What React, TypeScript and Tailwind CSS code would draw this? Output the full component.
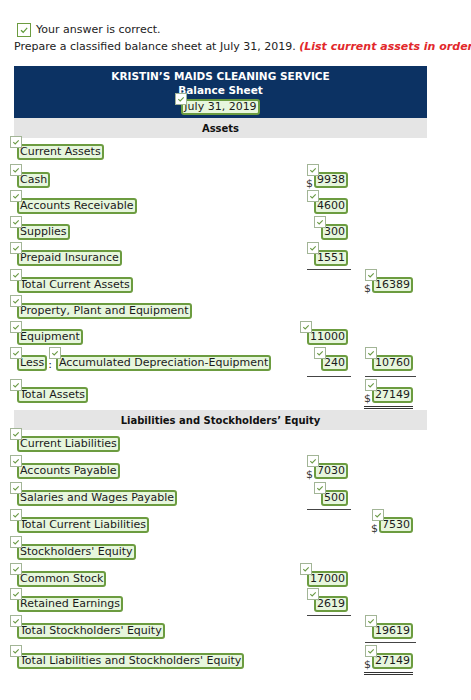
import React, { ReactNode } from "react";

const FONT = "font-['DejaVu_Sans','Verdana',sans-serif]";

function Mini({ cls }: { cls: string }) {
  return (
    <span
      className={`absolute ${cls} flex h-[12px] w-[12px] items-center justify-center border border-[#a2b596] bg-white`}
    >
      <svg width="8" height="8" viewBox="0 0 8 8">
        <path d="M1.3 4.1 L3.2 5.9 L6.7 2.3" fill="none" stroke="#6a9a45" strokeWidth="1.1" />
      </svg>
    </span>
  );
}

function Tag({ children, check = "-left-[9px] -top-[10px]" }: { children: ReactNode; check?: string }) {
  return (
    <span className="relative inline-flex h-[16px] items-center whitespace-nowrap rounded-[3px] border-2 border-[#6c9c40] bg-[#e7f6dd] px-[1px] text-[11px] leading-[12px] text-[#1b1b1b]">
      <Mini cls={check} />
      {children}
    </span>
  );
}

function Num({ v, dollar, dbl }: { v: string; dollar?: boolean; dbl?: boolean }) {
  return (
    <span
      className={`inline-flex items-end ${dbl ? "border-b-[3px] border-double border-[#333] pb-[3px]" : ""}`}
    >
      {dollar && <span className="mr-[1px] translate-y-[2px] text-[11px] leading-[12px] text-[#333]">$</span>}
      <Tag>{v}</Tag>
    </span>
  );
}

function Row({
  h,
  label,
  c1,
  c2,
  u1 = "",
  u2 = "",
}: {
  h: string;
  label?: ReactNode;
  c1?: ReactNode;
  c2?: ReactNode;
  u1?: string;
  u2?: string;
}) {
  return (
    <div className={`flex items-start ${h}`}>
      <div className="flex w-[293px] items-start pl-[3px]">{label}</div>
      <div className={`flex w-[44px] justify-end pr-[3px] ${u1}`}>{c1}</div>
      <div className="w-[14px]" />
      <div className={`flex w-[51px] justify-end pr-[3px] ${u2}`}>{c2}</div>
    </div>
  );
}

const U = "border-b border-[#444] pb-[3px]";
const U5 = "border-b border-[#444] pb-[5px]";

export default function App() {
  return (
    <div className={`${FONT} h-[700px] w-[471px] overflow-hidden bg-white text-[#222]`}>
      <div className="pt-[22px]">
        <div className="flex h-[15px] items-center pl-[17px]">
          <span className="flex h-[14px] w-[14px] items-center justify-center border border-[#6c9c40] bg-white">
            <svg width="10" height="10" viewBox="0 0 10 10">
              <path d="M2 5.2 L4.2 7.3 L8.2 2.9" fill="none" stroke="#5f9a3a" strokeWidth="1.2" />
            </svg>
          </span>
          <span className="ml-[5px] text-[11px] leading-[14px]">Your answer is correct.</span>
        </div>
        <div className="mt-[3px] h-[14px] whitespace-nowrap pl-[14px] text-[11px] leading-[14px]">
          Prepare a classified balance sheet at July 31, 2019.{" "}
          <span className="font-bold italic text-[#e2282b]">
            (List current assets in order of liquidity. List property, plant and equipment in order of land, building and equipment.)
          </span>
        </div>
      </div>

      <div className="ml-[14px] mt-[12px] w-[413px]">
        <div className="flex h-[52px] flex-col items-center bg-[#0c3263] pt-[3px] text-[10.5px] font-bold leading-[14px] text-white">
          <div>KRISTIN’S MAIDS CLEANING SERVICE</div>
          <div>Balance Sheet</div>
          <div className="mt-[2px] flex font-normal">
            <Tag check="-left-[8px] -top-[8px]">July 31, 2019</Tag>
          </div>
        </div>
        <div className="flex h-[20px] items-center justify-center bg-[#e5e5e5] text-[10px] font-bold text-[#111]">
          Assets
        </div>

        <Row h="h-[25px] pt-[6px]" label={<Tag>Current Assets</Tag>} />
        <Row h="h-[26px] pt-[9px]" label={<Tag>Cash</Tag>} c1={<Num v="9938" dollar />} />
        <Row h="h-[26px] pt-[9px]" label={<Tag>Accounts Receivable</Tag>} c1={<Num v="4600" />} />
        <Row h="h-[26px] pt-[9px]" label={<Tag>Supplies</Tag>} c1={<Num v="300" />} />
        <Row h="h-[27px] pt-[9px]" label={<Tag>Prepaid Insurance</Tag>} c1={<Num v="1551" />} u1={U} />
        <Row h="h-[26px] pt-[9px]" label={<Tag>Total Current Assets</Tag>} c2={<Num v="16389" dollar />} />
        <Row h="h-[26px] pt-[9px]" label={<Tag>Property, Plant and Equipment</Tag>} />
        <Row h="h-[26px] pt-[9px]" label={<Tag>Equipment</Tag>} c1={<Num v="11000" />} />
        <Row
          h="h-[32px] pt-[9px]"
          label={
            <span className="flex items-end">
              <Tag>Less</Tag>
              <span className="mx-[1px] text-[11px] leading-[12px]">:</span>
              <span className="ml-[3px] flex">
                <Tag>Accumulated Depreciation-Equipment</Tag>
              </span>
            </span>
          }
          c1={<Num v="240" />}
          c2={<Num v="10760" />}
          u1={U5}
          u2={U5}
        />
        <Row h="h-[32px] pt-[9px]" label={<Tag>Total Assets</Tag>} c2={<Num v="27149" dollar dbl />} />

        <div className="flex h-[20px] items-center justify-center bg-[#e5e5e5] text-[10px] font-bold text-[#111]">
          Liabilities and Stockholders’ Equity
        </div>

        <Row h="h-[24px] pt-[6px]" label={<Tag>Current Liabilities</Tag>} />
        <Row h="h-[27px] pt-[9px]" label={<Tag>Accounts Payable</Tag>} c1={<Num v="7030" dollar />} />
        <Row h="h-[27px] pt-[9px]" label={<Tag>Salaries and Wages Payable</Tag>} c1={<Num v="500" />} u1={U} />
        <Row h="h-[27px] pt-[9px]" label={<Tag>Total Current Liabilities</Tag>} c2={<Num v="7530" dollar />} />
        <Row h="h-[27px] pt-[9px]" label={<Tag>Stockholders' Equity</Tag>} />
        <Row h="h-[25px] pt-[9px]" label={<Tag>Common Stock</Tag>} c1={<Num v="17000" />} />
        <Row h="h-[27px] pt-[9px]" label={<Tag>Retained Earnings</Tag>} c1={<Num v="2619" />} u1={U} />
        <Row h="h-[30px] pt-[9px]" label={<Tag>Total Stockholders' Equity</Tag>} c2={<Num v="19619" />} u2={U} />
        <Row
          h="h-[30px] pt-[9px]"
          label={<Tag>Total Liabilities and Stockholders' Equity</Tag>}
          c2={<Num v="27149" dollar dbl />}
        />
      </div>
    </div>
  );
}
